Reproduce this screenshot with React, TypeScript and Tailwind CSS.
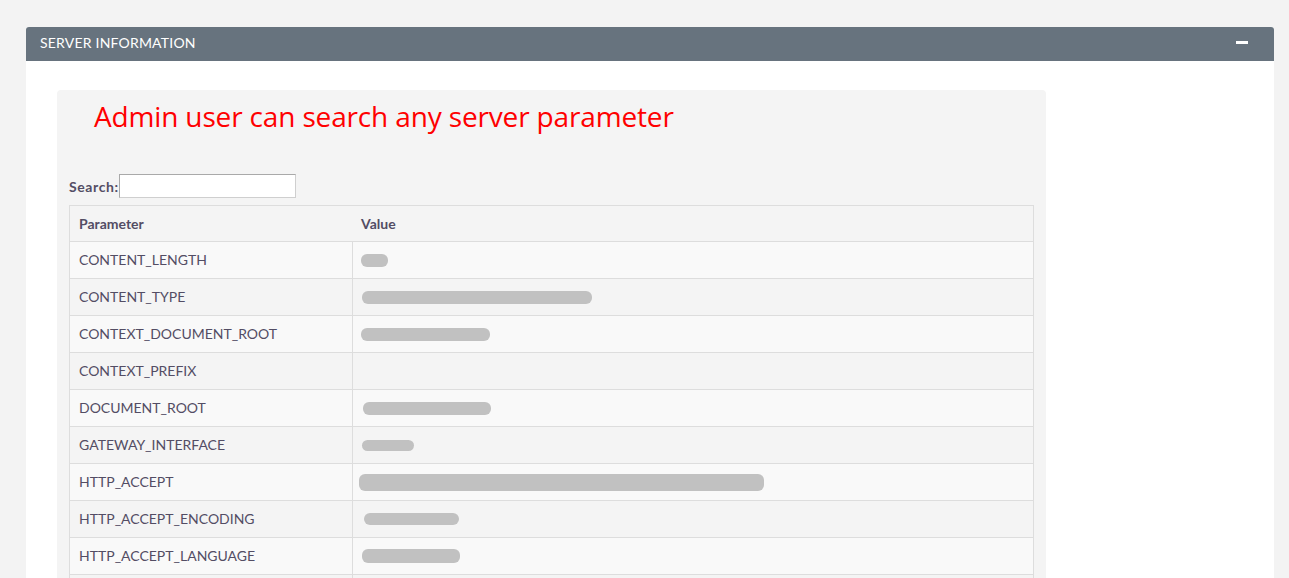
import React from 'react';

interface ServerParam {
  name: string;
  // Redacted value: offset, width, height of the grey block
  bar?: [number, number, number];
}

const params: ServerParam[] = [
  { name: 'CONTENT_LENGTH', bar: [0, 27, 13] },
  { name: 'CONTENT_TYPE', bar: [1, 230, 13] },
  { name: 'CONTEXT_DOCUMENT_ROOT', bar: [0, 129, 13] },
  { name: 'CONTEXT_PREFIX' },
  { name: 'DOCUMENT_ROOT', bar: [2, 128, 13] },
  { name: 'GATEWAY_INTERFACE', bar: [1, 52, 11] },
  { name: 'HTTP_ACCEPT', bar: [-2, 405, 17] },
  { name: 'HTTP_ACCEPT_ENCODING', bar: [3, 95, 12] },
  { name: 'HTTP_ACCEPT_LANGUAGE', bar: [1, 98, 14] },
  { name: 'HTTP_CONNECTION', bar: [1, 80, 13] },
];

export default function App() {
  return (
    <div className="min-h-screen bg-[#f3f3f3] pt-[27px] pl-[26px] pr-[15px] font-['Lato','Open_Sans',sans-serif]">
      <div className="bg-white rounded-t-[3px] pb-10">
        {/* Panel header */}
        <div className="h-[34px] bg-[#67737e] rounded-t-[3px] flex items-center justify-between pl-[14px] pr-[26px] pb-[4px]">
          <span className="text-white text-[14px] tracking-[0.2px]">SERVER INFORMATION</span>
          <span className="block w-[12px] h-[3px] bg-white" />
        </div>

        <div className="pt-[29px] pl-[31px]">
          <div className="w-[989px] bg-[#f4f4f4] rounded-t-[4px] px-[12px] pb-6">
            <p className="pt-[8px] pl-[25px] h-[84px] text-[28px] leading-[36px] text-[#ff0000] font-['Open_Sans','Lato',sans-serif] tracking-[-0.15px]">
              Admin user can search any server parameter
            </p>

            <div className="flex items-center h-[24px]">
              <label className="text-[14px] tracking-[0.6px] font-bold text-[#534d64]">Search:</label>
              <input
                type="text"
                className="w-[177px] h-[24px] bg-white border border-[#cfcfcf] border-t-[#a9a9a9] border-l-[#a9a9a9] outline-none"
              />
            </div>

            <div className="mt-[7px] border border-[#dddddd] text-[14px] text-[#534d64]">
              <div className="flex h-[35px] items-center font-bold">
                <div className="w-[282px] pl-[9px]">Parameter</div>
                <div className="flex-1 pl-[9px]">Value</div>
              </div>
              {params.map((p, i) => (
                <div
                  key={p.name}
                  className={
                    'flex h-[37px] border-t border-[#dddddd] ' +
                    (i % 2 === 0 ? 'bg-[#f9f9f9]' : 'bg-[#f4f4f4]')
                  }
                >
                  <div className="w-[282px] pl-[9px] pb-[2px] flex items-center">{p.name}</div>
                  <div className="flex-1 border-l border-[#dddddd] pl-[8px] flex items-center">
                    {p.bar && (
                      <span
                        className="block bg-[#c1c1c1] rounded-[6px]"
                        style={{ marginLeft: p.bar[0], width: p.bar[1], height: p.bar[2] }}
                      />
                    )}
                  </div>
                </div>
              ))}
            </div>
          </div>
        </div>
      </div>
    </div>
  );
}
